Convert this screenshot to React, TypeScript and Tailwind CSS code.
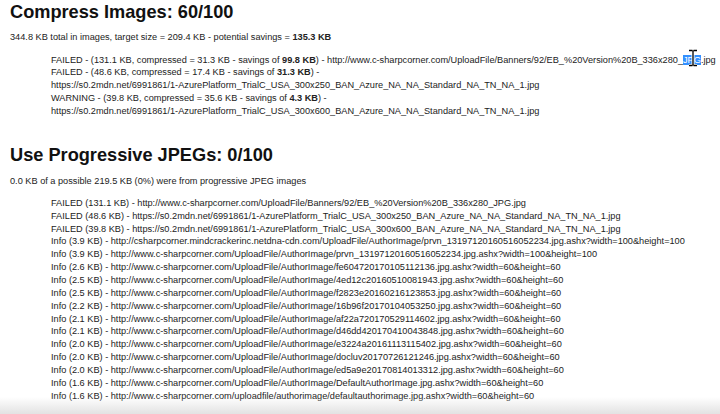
import React from "react";

const list1: React.ReactNode[] = [
  <>
    FAILED - (131.1 KB, compressed = 31.3 KB - savings of <b>99.8 KB</b>) - http://www.c-sharpcorner.com/UploadFile/Banners/92/EB_%20Version%20B_336x280_
    <span className="bg-[#3390ff] text-white">JPG</span>.jpg
  </>,
  <>
    FAILED - (48.6 KB, compressed = 17.4 KB - savings of <b>31.3 KB</b>) -
  </>,
  <>https://s0.2mdn.net/6991861/1-AzurePlatform_TrialC_USA_300x250_BAN_Azure_NA_NA_Standard_NA_TN_NA_1.jpg</>,
  <>
    WARNING - (39.8 KB, compressed = 35.6 KB - savings of <b>4.3 KB</b>) -
  </>,
  <>https://s0.2mdn.net/6991861/1-AzurePlatform_TrialC_USA_300x600_BAN_Azure_NA_NA_Standard_NA_TN_NA_1.jpg</>,
];

const list2: string[] = [
  "FAILED (131.1 KB) - http://www.c-sharpcorner.com/UploadFile/Banners/92/EB_%20Version%20B_336x280_JPG.jpg",
  "FAILED (48.6 KB) - https://s0.2mdn.net/6991861/1-AzurePlatform_TrialC_USA_300x250_BAN_Azure_NA_NA_Standard_NA_TN_NA_1.jpg",
  "FAILED (39.8 KB) - https://s0.2mdn.net/6991861/1-AzurePlatform_TrialC_USA_300x600_BAN_Azure_NA_NA_Standard_NA_TN_NA_1.jpg",
  "Info (3.9 KB) - http://csharpcorner.mindcrackerinc.netdna-cdn.com/UploadFile/AuthorImage/prvn_13197120160516052234.jpg.ashx?width=100&height=100",
  "Info (3.9 KB) - http://www.c-sharpcorner.com/UploadFile/AuthorImage/prvn_13197120160516052234.jpg.ashx?width=100&height=100",
  "Info (2.6 KB) - http://www.c-sharpcorner.com/UploadFile/AuthorImage/fe604720170105112136.jpg.ashx?width=60&height=60",
  "Info (2.5 KB) - http://www.c-sharpcorner.com/UploadFile/AuthorImage/4ed12c20160510081943.jpg.ashx?width=60&height=60",
  "Info (2.5 KB) - http://www.c-sharpcorner.com/UploadFile/AuthorImage/f2823e20160216123853.jpg.ashx?width=60&height=60",
  "Info (2.2 KB) - http://www.c-sharpcorner.com/UploadFile/AuthorImage/16b96f20170104053250.jpg.ashx?width=60&height=60",
  "Info (2.1 KB) - http://www.c-sharpcorner.com/UploadFile/AuthorImage/af22a720170529114602.jpg.ashx?width=60&height=60",
  "Info (2.1 KB) - http://www.c-sharpcorner.com/UploadFile/AuthorImage/d46dd420170410043848.jpg.ashx?width=60&height=60",
  "Info (2.0 KB) - http://www.c-sharpcorner.com/UploadFile/AuthorImage/e3224a20161113115402.jpg.ashx?width=60&height=60",
  "Info (2.0 KB) - http://www.c-sharpcorner.com/UploadFile/AuthorImage/docluv20170726121246.jpg.ashx?width=60&height=60",
  "Info (2.0 KB) - http://www.c-sharpcorner.com/UploadFile/AuthorImage/ed5a9e20170814013312.jpg.ashx?width=60&height=60",
  "Info (1.6 KB) - http://www.c-sharpcorner.com/UploadFile/AuthorImage/DefaultAuthorImage.jpg.ashx?width=60&height=60",
  "Info (1.6 KB) - http://www.c-sharpcorner.com/uploadfile/authorimage/defaultauthorimage.jpg.ashx?width=60&height=60",
];

export default function App() {
  return (
    <div className="relative w-[720px] h-[414px] overflow-hidden bg-white text-[#222] font-['Liberation_Sans',Arial,sans-serif]">
      <div className="pl-[10px] pt-[1px]">
        <h1 className="text-[18.2px] leading-[22px] font-bold text-[#111]">Compress Images: 60/100</h1>
        <p className="mt-[8px] text-[9.2px] leading-[12.7px] whitespace-nowrap">
          344.8 KB total in images, target size = 209.4 KB - potential savings = <b>135.3 KB</b>
        </p>
        <div className="mt-[10px] pl-[41px] text-[9.2px] leading-[12.7px] whitespace-nowrap">
          {list1.map((l, i) => (
            <div key={i}>{l}</div>
          ))}
        </div>
        <h1 className="mt-[27px] text-[18.2px] leading-[22px] font-bold text-[#111]">Use Progressive JPEGs: 0/100</h1>
        <p className="mt-[9px] text-[9.2px] leading-[12.7px] whitespace-nowrap">
          0.0 KB of a possible 219.5 KB (0%) were from progressive JPEG images
        </p>
        <div className="mt-[9px] pl-[41px] text-[9.2px] leading-[12.85px] whitespace-nowrap">
          {list2.map((l, i) => (
            <div key={i}>{l}</div>
          ))}
        </div>
      </div>
      {/* I-beam cursor */}
      <svg className="absolute left-[688px] top-[49px]" width="10" height="18" viewBox="0 0 10 18">
        <path d="M1 1.5h3.5M5.5 1.5H9M5 1.5v15M1 16.5h3.5M5.5 16.5H9" stroke="white" strokeWidth="3" fill="none" />
        <path d="M1 1.5h3.5M5.5 1.5H9M5 1.5v15M1 16.5h3.5M5.5 16.5H9" stroke="black" strokeWidth="1.3" fill="none" />
      </svg>
      {/* bottom shade */}
      <div className="absolute left-0 right-0 bottom-0 h-[17px] bg-gradient-to-b from-[#ffffff00] to-[#e2e2e2]" />
    </div>
  );
}
